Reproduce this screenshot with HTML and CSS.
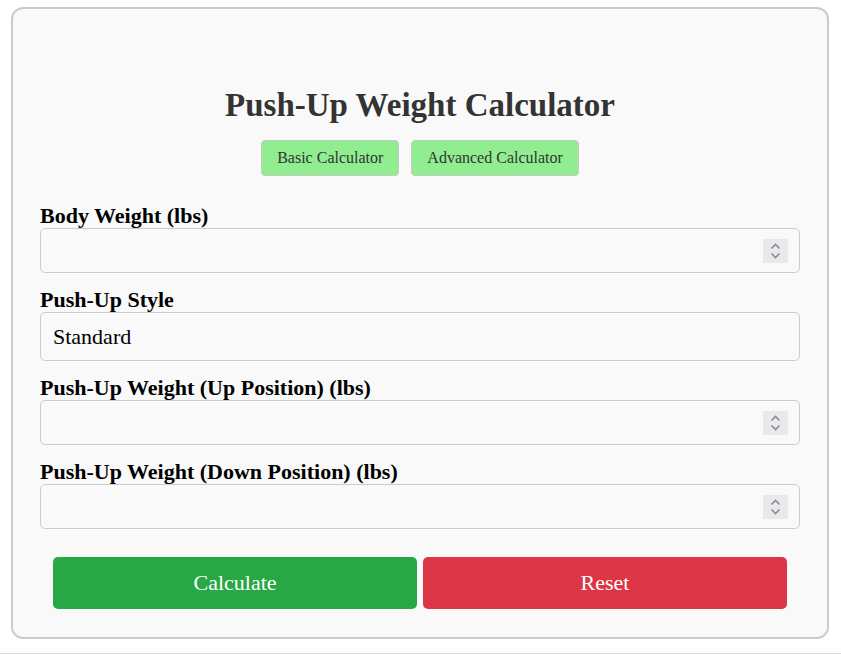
FILE: index.html
```html
<!DOCTYPE html>
<html>
<head>
<meta charset="utf-8">
<link rel="stylesheet" href="styles.css">
</head>
<body>
<div class="calc">
  <h1 class="title">Push-Up Weight Calculator</h1>
  <div class="tabs">
    <button class="tab">Basic Calculator</button>
    <button class="tab">Advanced Calculator</button>
  </div>
  <div class="field">
    <label class="lbl">Body Weight (lbs)</label>
    <div class="num">
      <input class="inp" type="number">
      <span class="spin"><svg width="25" height="24" viewBox="0 0 25 24"><path d="M8.5 9.5 L12.5 5.5 L16.5 9.5" fill="none" stroke="#8b8b96" stroke-width="1.6"/><path d="M8.5 14.5 L12.5 18.5 L16.5 14.5" fill="none" stroke="#8b8b96" stroke-width="1.6"/></svg></span>
    </div>
  </div>
  <div class="field">
    <label class="lbl">Push-Up Style</label>
    <select class="sel"><option>Standard</option></select>
  </div>
  <div class="field">
    <label class="lbl">Push-Up Weight (Up Position) (lbs)</label>
    <div class="num">
      <input class="inp" type="number">
      <span class="spin"><svg width="25" height="24" viewBox="0 0 25 24"><path d="M8.5 9.5 L12.5 5.5 L16.5 9.5" fill="none" stroke="#8b8b96" stroke-width="1.6"/><path d="M8.5 14.5 L12.5 18.5 L16.5 14.5" fill="none" stroke="#8b8b96" stroke-width="1.6"/></svg></span>
    </div>
  </div>
  <div class="field">
    <label class="lbl">Push-Up Weight (Down Position) (lbs)</label>
    <div class="num">
      <input class="inp" type="number">
      <span class="spin"><svg width="25" height="24" viewBox="0 0 25 24"><path d="M8.5 9.5 L12.5 5.5 L16.5 9.5" fill="none" stroke="#8b8b96" stroke-width="1.6"/><path d="M8.5 14.5 L12.5 18.5 L16.5 14.5" fill="none" stroke="#8b8b96" stroke-width="1.6"/></svg></span>
    </div>
  </div>
  <div class="actions">
    <button class="btn btn-calc">Calculate</button>
    <button class="btn btn-reset">Reset</button>
  </div>
</div>
<div class="rule"></div>
</body>
</html>
```
FILE: styles.css
```css
html, body {
  margin: 0;
  padding: 0;
  background: #fff;
  font-family: "Liberation Serif", "Times New Roman", serif;
}
.calc {
  box-sizing: border-box;
  width: 818px;
  margin: 7px 0 0 11px;
  padding: 77px 27px 28px;
  background: #f9f9f9;
  border: 2px solid #ccc;
  border-radius: 12px;
}
.title {
  margin: 0;
  text-align: center;
  font-size: 33px;
  font-weight: bold;
  color: #333;
  line-height: 39px;
}
.tabs {
  display: flex;
  justify-content: center;
  gap: 12px;
  margin: 15px 0 27px;
}
.tab {
  height: 36px;
  padding: 0 15px;
  background: #90ee90;
  border: 1px solid #c8c8c8;
  border-radius: 4px;
  font-family: "Liberation Serif", serif;
  font-size: 16px;
  color: #333;
}
.field {
  display: flex;
  flex-direction: column;
  margin-bottom: 14px;
}
.lbl {
  font-size: 22px;
  font-weight: bold;
  color: #000;
  line-height: 25px;
}
.num {
  position: relative;
}
.inp, .sel {
  box-sizing: border-box;
  display: block;
  width: 100%;
  border: 1px solid #ccc;
  border-radius: 5px;
  background: #f9f9f9;
  font-family: "Liberation Serif", serif;
  font-size: 22px;
  color: #000;
  padding: 0 12px;
  margin: 0;
}
.inp {
  height: 45px;
  -moz-appearance: textfield;
}
.inp::-webkit-inner-spin-button,
.inp::-webkit-outer-spin-button {
  -webkit-appearance: none;
  margin: 0;
}
.spin {
  position: absolute;
  right: 12px;
  top: 11px;
  width: 25px;
  height: 24px;
  background: #e9e9ed;
  display: block;
}
.spin svg { display: block; }
.sel {
  height: 49px;
  appearance: none;
  -webkit-appearance: none;
}
.actions {
  display: flex;
  justify-content: center;
  gap: 6px;
  margin-top: 28px;
}
.btn {
  width: 364px;
  height: 52px;
  border: none;
  border-radius: 5px;
  color: #fff;
  font-family: "Liberation Serif", serif;
  font-size: 22px;
}
.btn-calc { background: #28a745; }
.btn-reset { background: #dc3545; }
.rule {
  margin-top: 14px;
  border-top: 1px solid #ddd;
}
```
